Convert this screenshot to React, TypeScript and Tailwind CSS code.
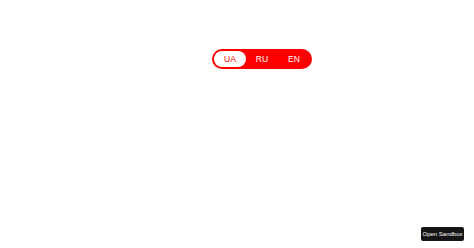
import { useState } from 'react';

const langs = ['UA', 'RU', 'EN'];

export default function App() {
  const [active, setActive] = useState('UA');

  return (
    <div className="relative h-[248px] w-full bg-white font-['Liberation_Sans',sans-serif]">
      <div className="pl-[212px] pt-[49px]">
        <div className="flex h-[20px] w-[100px] items-center rounded-full bg-[#ff0000] p-[2px]">
          {langs.map((lang) => (
            <button
              key={lang}
              onClick={() => setActive(lang)}
              className={
                active === lang
                  ? 'flex h-full w-[32px] items-center justify-center rounded-full bg-white text-[8.5px] text-[#ff0000]'
                  : 'flex h-full w-[32px] items-center justify-center text-[8.5px] text-white'
              }
            >
              {lang}
            </button>
          ))}
        </div>
      </div>

      <button className="absolute bottom-[7px] right-[10px] flex h-[14px] w-[43px] items-center justify-center rounded-[2px] bg-[#151515] text-[6px] text-white">
        Open Sandbox
      </button>
    </div>
  );
}
